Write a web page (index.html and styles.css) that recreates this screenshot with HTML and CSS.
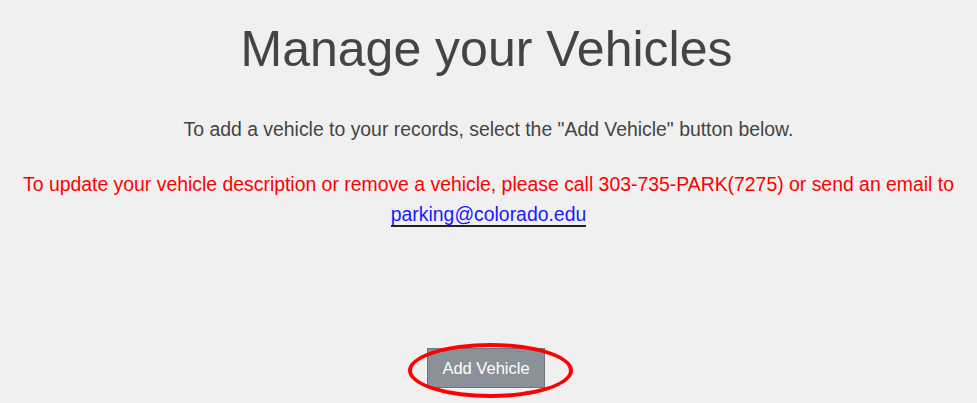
FILE: index.html
```html
<!DOCTYPE html>
<html>
<head>
<meta charset="utf-8">
<link rel="stylesheet" href="styles.css">
</head>
<body>
<main class="page">
  <h1 class="title">Manage your Vehicles</h1>
  <p class="intro">To add a vehicle to your records, select the "Add Vehicle" button below.</p>
  <p class="notice">To update your vehicle description or remove a vehicle, please call 303-735-PARK(7275) or send an email to <a class="mail" href="#">parking@colorado.edu</a></p>
  <div class="actions">
    <span class="highlight">
      <button class="btn">Add Vehicle</button>
    </span>
  </div>
</main>
</body>
</html>
```
FILE: styles.css
```css
html, body {
  margin: 0;
  padding: 0;
  background: #f0f0f0;
}
body {
  font-family: "Liberation Sans", Arial, sans-serif;
  color: #444;
  height: 403px;
  overflow: hidden;
}
.page {
  display: flex;
  flex-direction: column;
  align-items: center;
  text-align: center;
}
.title {
  margin: 19.5px 0 0;
  font-size: 50px;
  font-weight: normal;
  color: #444;
  line-height: 58px;
  margin-left: -4px;
}
.intro {
  margin: 39.5px 0 0;
  font-size: 19.4px;
  line-height: 24px;
}
.notice {
  margin: 28px 0 0;
  font-size: 19.4px;
  line-height: 30px;
  color: #ff0000;
  padding: 0 10px;
}
.mail {
  color: #1a1aff;
  text-decoration: none;
  border-bottom: 2px solid #222;
}
.actions {
  margin-top: 119px;
  display: flex;
  justify-content: center;
  margin-left: -5px;
}
.highlight {
  position: relative;
  display: flex;
}
.highlight::after {
  content: "";
  position: absolute;
  left: -19px;
  right: -28px;
  top: -5px;
  bottom: -10px;
  border: 4px solid #ff0000;
  border-radius: 50%;
  pointer-events: none;
}
.btn {
  font-family: "Liberation Sans", Arial, sans-serif;
  font-size: 16.5px;
  color: #fff;
  background: #8a9199;
  border: 1px solid #6f757c;
  width: 118px;
  height: 40px;
  padding: 0;
}
```
